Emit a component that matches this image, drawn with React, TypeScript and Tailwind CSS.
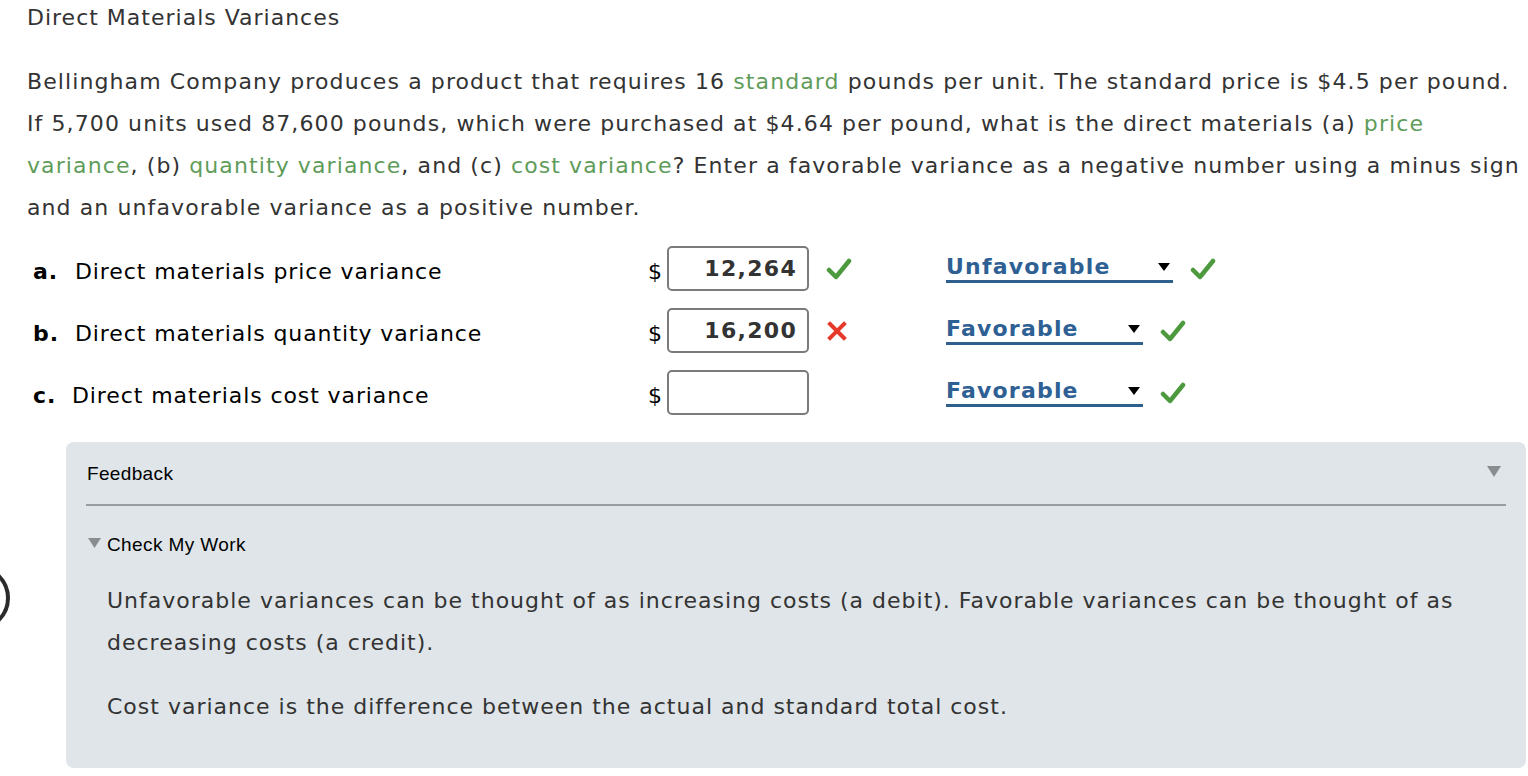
import React from 'react';

const verdana = { fontFamily: '"DejaVu Sans", Verdana, sans-serif' };
const arial = { fontFamily: '"Liberation Sans", Arial, sans-serif' };

function Check() {
  return (
    <svg width="26" height="24" viewBox="0 0 26 24" className="shrink-0">
      <path d="M3 13 L10 20 L23 4" fill="none" stroke="#4d9a3e" strokeWidth="4.5" strokeLinecap="round" strokeLinejoin="round" />
    </svg>
  );
}

function Cross() {
  return (
    <svg width="22" height="22" viewBox="0 0 22 22" className="shrink-0">
      <path d="M4 4 L18 18 M18 4 L4 18" fill="none" stroke="#e6392b" strokeWidth="4" strokeLinecap="square" />
    </svg>
  );
}

function Dropdown({ value, width }: { value: string; width: string }) {
  return (
    <div className={`flex items-center justify-between bg-white border-b-[3px] border-[#2e5f8d] rounded-t-[4px] h-[29px] ${width}`}>
      <span className="text-[22px] font-bold text-[#2e6094] leading-none tracking-[1.2px]">{value}</span>
      <svg width="12" height="8" viewBox="0 0 12 8" className="mr-[3px]">
        <path d="M0 0 H12 L6 8 Z" fill="#000" />
      </svg>
    </div>
  );
}

type Row = {
  letter: string;
  label: string;
  amount: string;
  amountOk: boolean | null;
  choice: string;
  dropWidth: string;
};

const ROWS: Row[] = [
  { letter: 'a.', label: 'Direct materials price variance', amount: '12,264', amountOk: true, choice: 'Unfavorable', dropWidth: 'w-[227px]' },
  { letter: 'b.', label: 'Direct materials quantity variance', amount: '16,200', amountOk: false, choice: 'Favorable', dropWidth: 'w-[197px]' },
  { letter: 'c.', label: 'Direct materials cost variance', amount: '', amountOk: null, choice: 'Favorable', dropWidth: 'w-[197px]' },
];

export default function App() {
  return (
    <div className="relative min-h-[776px] bg-white overflow-hidden text-[#333]" style={verdana}>
      {/* partial circle on the left edge */}
      <div className="absolute left-[-58px] top-[565px] w-[68px] h-[66px] rounded-full border-[4px] border-[#2b2b2b]" />

      <div className="pl-[27px]">
        <h1 className="text-[22px] leading-[36px] font-normal text-[#333] tracking-[1px]">Direct Materials Variances</h1>

        <p className="mt-[25px] text-[22px] leading-[42px] text-[#333] tracking-[1.1px] w-[1500px]">
          Bellingham Company produces a product that requires 16{' '}
          <span className="text-[#5f9c5a]">standard</span> pounds per unit. The standard price is $4.5 per pound.
          If 5,700 units used 87,600 pounds, which were purchased at $4.64 per pound, what is the direct materials (a){' '}
          <span className="text-[#5f9c5a]">price variance</span>, (b){' '}
          <span className="text-[#5f9c5a]">quantity variance</span>, and (c){' '}
          <span className="text-[#5f9c5a]">cost variance</span>? Enter a favorable variance as a negative number using a minus sign
          and an unfavorable variance as a positive number.
        </p>

        <div className="mt-[17px] flex flex-col gap-[17px]">
          {ROWS.map((r) => (
            <div key={r.letter} className="flex items-center h-[45px]">
              <div className="w-[621px] flex items-center text-[22px] text-black pt-[5px] tracking-[0.9px]">
                <span className="font-bold w-[48px] pl-[6px] shrink-0">{r.letter}</span>
                <span className={r.letter === 'c.' ? '-ml-[3px]' : ''}>{r.label}</span>
              </div>
              <span className="text-[22px] text-black w-[19px] pt-[5px]">$</span>
              <div className="w-[142px] h-[45px] border-2 border-[#7b7b7b] rounded-[5px] bg-white flex items-center justify-end pr-[10px] shrink-0">
                <span className="text-[22px] font-bold text-[#333] tracking-[1.3px]">{r.amount}</span>
              </div>
              <div className="w-[137px] pl-[17px] flex items-center">
                {r.amountOk === true && <Check />}
                {r.amountOk === false && <Cross />}
              </div>
              <Dropdown value={r.choice} width={r.dropWidth} />
              <div className="ml-[17px]">
                <Check />
              </div>
            </div>
          ))}
        </div>

        <div className="mt-[27px] ml-[39px] w-[1460px] h-[326px] rounded-[8px] bg-[#dfe5e8] px-[20px]">
          <div className="flex items-center justify-between h-[64px] border-b-2 border-[#9a9da0]">
            <span className="text-[19px] text-black pl-[1px] pt-[2px] tracking-[0.35px]" style={arial}>
              Feedback
            </span>
            <svg width="14" height="11" viewBox="0 0 14 11" className="mr-[5px] mb-[4px]">
              <path d="M0 0 H14 L7 11 Z" fill="#8a8d90" />
            </svg>
          </div>
          <div className="flex items-center mt-[25px]">
            <svg width="14" height="10" viewBox="0 0 14 10" className="ml-[2px] mr-[5px] mt-[-4px]">
              <path d="M0 0 H13 L6.5 10 Z" fill="#8a8d90" />
            </svg>
            <span className="text-[19px] text-black tracking-[0.4px]" style={arial}>
              Check My Work
            </span>
          </div>
          <div className="pl-[21px] pr-[20px] mt-[20px] text-[22px] leading-[42px] text-[#333] tracking-[1px]">
            <p>
              Unfavorable variances can be thought of as increasing costs (a debit). Favorable variances can be thought of as
              decreasing costs (a credit).
            </p>
            <p className="mt-[22px]">Cost variance is the difference between the actual and standard total cost.</p>
          </div>
        </div>
      </div>
    </div>
  );
}
